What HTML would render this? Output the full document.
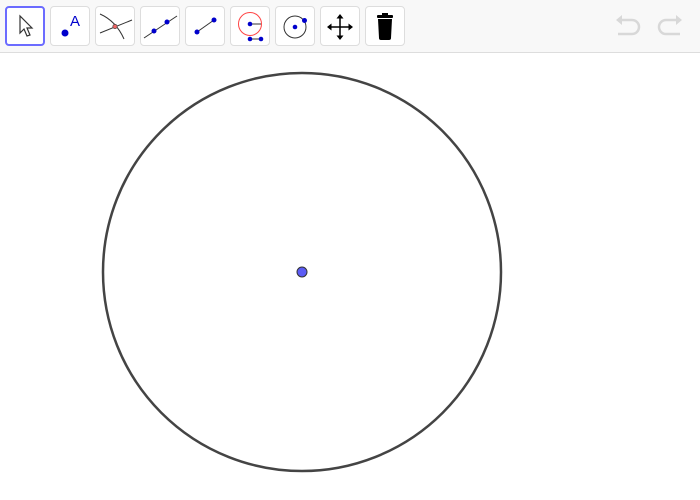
<!DOCTYPE html>
<html><head><style>
body{margin:0;width:700px;height:500px;background:#fff;overflow:hidden;font-family:"Liberation Sans",sans-serif}
.tb{position:absolute;left:0;top:0;width:700px;height:52px;background:#f8f8f8;border-bottom:1px solid #ddd}
.b{position:absolute;top:6px;width:38px;height:38px;border:1px solid #ddd;border-radius:4px;background:#fff}
.b svg{position:absolute;left:0;top:0}
.sel{border:2px solid #6b6bff;width:36px;height:36px}
</style></head><body>
<div class="tb">
<div class="b sel" style="left:5px"><svg width="36" height="36"><path d="M13 8 L13 25 L17 21 L20 28 L23 27 L20 20 L25 20 Z" fill="#fff" stroke="#333" stroke-width="1.2"/></svg></div>
<div class="b" style="left:50px"><svg width="38" height="38"><circle cx="14" cy="26" r="3.5" fill="#00c"/><text x="19" y="19" font-size="15" fill="#00c" font-family="Liberation Sans">A</text></svg></div>
<div class="b" style="left:95px"><svg width="38" height="38"><path d="M4 7 Q20 14 28 32" fill="none" stroke="#333"/><path d="M4 26 L36 13" stroke="#333"/><circle cx="19" cy="19.5" r="2.2" fill="#e66" stroke="#333" stroke-width=".6"/></svg></div>
<div class="b" style="left:140px"><svg width="38" height="38"><path d="M3 31 L36 9" stroke="#333"/><circle cx="13" cy="24" r="2.5" fill="#00c"/><circle cx="26" cy="15" r="2.5" fill="#00c"/></svg></div>
<div class="b" style="left:185px"><svg width="38" height="38"><path d="M11 25 L28 13" stroke="#333"/><circle cx="11" cy="25" r="2.5" fill="#00c"/><circle cx="28" cy="13" r="2.5" fill="#00c"/></svg></div>
<div class="b" style="left:230px"><svg width="38" height="38"><circle cx="19" cy="17" r="11.5" fill="none" stroke="#f44"/><path d="M19 17 H30" stroke="#333"/><circle cx="19" cy="17" r="2.3" fill="#00c"/><path d="M19 32 H30" stroke="#333"/><circle cx="19" cy="32" r="2.3" fill="#00c"/><circle cx="30" cy="32" r="2.3" fill="#00c"/></svg></div>
<div class="b" style="left:275px"><svg width="38" height="38"><circle cx="19" cy="20" r="11" fill="none" stroke="#333"/><circle cx="19" cy="20" r="2.3" fill="#00c"/><circle cx="28.5" cy="13.5" r="2.5" fill="#00c"/></svg></div>
<div class="b" style="left:320px"><svg width="38" height="38"><path d="M19 9 V31 M8 20 H30" stroke="#000" stroke-width="1.5"/><path d="M19 7 L15.5 11.5 H22.5Z M19 33 L15.5 28.5 H22.5Z M6 20 L10.5 16.5 V23.5Z M32 20 L27.5 16.5 V23.5Z" fill="#000"/></svg></div>
<div class="b" style="left:365px"><svg width="38" height="38"><rect x="11" y="8" width="16" height="3" rx="1" fill="#000"/><rect x="16" y="6" width="6" height="3" fill="#000"/><path d="M12 12 H26 L25 31 Q25 33 23 33 H15 Q13 33 13 31Z" fill="#000"/></svg></div>
<svg style="position:absolute;left:610px;top:10px" width="80" height="30"><g fill="none" stroke="#d8d8d8" stroke-width="2.5"><path d="M10 10 H22 A7 7 0 0 1 22 24 H8"/><path d="M68 10 H56 A7 7 0 0 0 56 24 H70"/></g><path d="M6 10 L12 5 V15Z M72 10 L66 5 V15Z" fill="#d8d8d8"/></svg>
</div>
<svg style="position:absolute;left:0;top:0" width="700" height="500"><circle cx="302" cy="272" r="199" fill="none" stroke="#444" stroke-width="2.5"/><circle cx="302" cy="272" r="5" fill="#5c5cf5" stroke="#333" stroke-width="1"/></svg>
</body></html>
